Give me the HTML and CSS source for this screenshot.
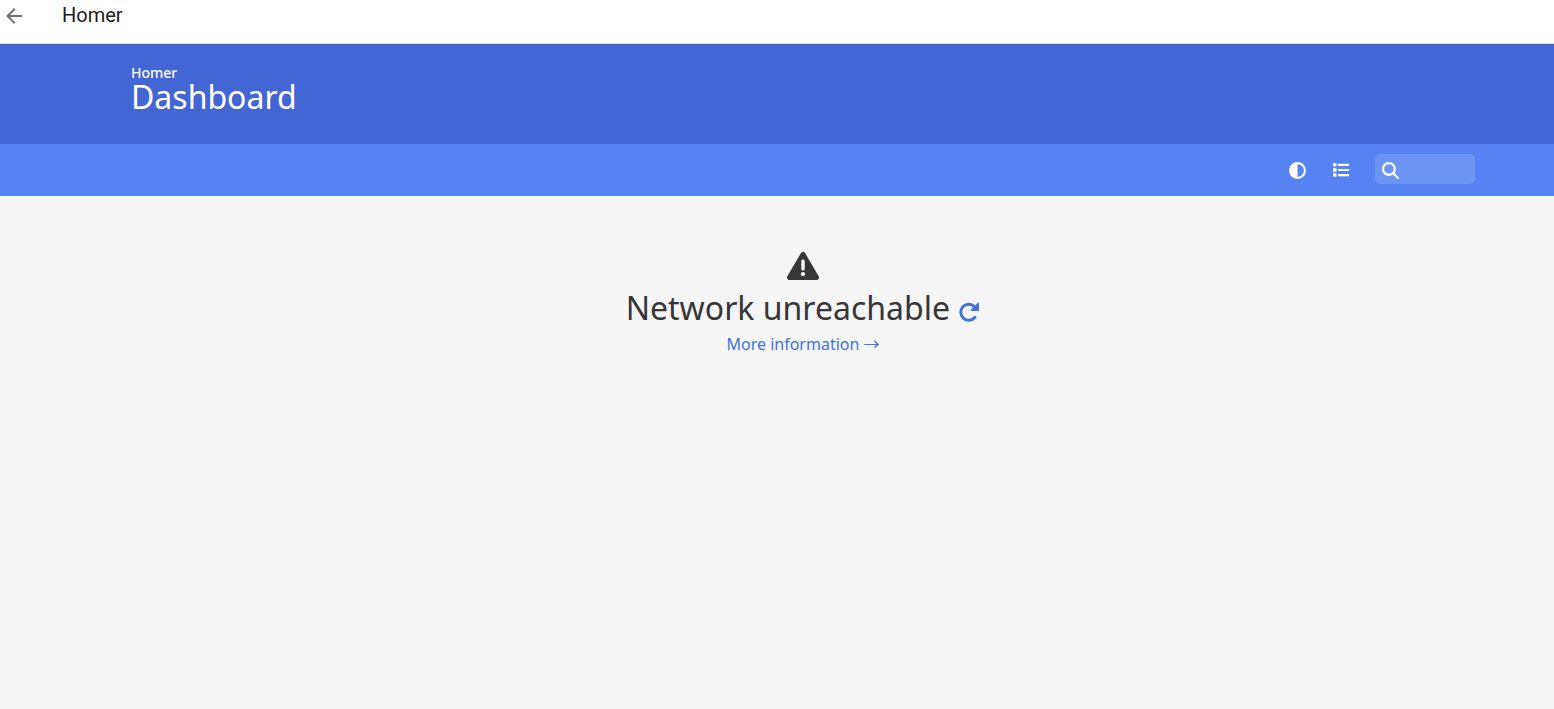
FILE: index.html
```html
<!DOCTYPE html>
<html lang="en">
<head>
<meta charset="utf-8">
<title>Homer</title>
<link rel="stylesheet" href="styles.css">
</head>
<body>
<div class="toolbar">
  <button class="back" type="button" aria-label="Back">
    <svg width="24" height="24" viewBox="0 0 24 24" fill="currentColor"><path d="M20 11v2H8l5.500 5.500-1.420 1.420L4.160 12l7.920-7.920L13.500 5.500 8 11h12z"/></svg>
  </button>
  <span class="toolbar-title">Homer</span>
</div>
<header class="banner">
  <div class="container">
    <span class="headline">Homer</span>
    <h1 class="title">Dashboard</h1>
  </div>
</header>
<nav class="navbar" aria-label="Dashboard tools">
  <div class="container navbar-end">
    <button class="tool" type="button" aria-label="Toggle theme">
      <svg width="17" height="17" viewBox="0 0 512 512" fill="currentColor"><path d="M448 256c0-106-86-192-192-192v384c106 0 192-86 192-192zM0 256a256 256 0 1 1 512 0A256 256 0 1 1 0 256z"/></svg>
    </button>
    <button class="tool" type="button" aria-label="Toggle layout">
      <svg width="16" height="16" viewBox="0 0 16 16" fill="currentColor"><path d="M0 2q0-1 1-1h2.500v3.500H0zM0 6.200h3.500v3.500H0zM0 11.300h3.500v3.500H1q-1 0-1-1zM5 1.800h11v2.200H5zM5 6.900h11v2.200H5zM5 12h11v2.200H5z"/></svg>
    </button>
    <label class="search">
      <svg class="search-icon" width="17" height="17" viewBox="0 0 512 512" fill="currentColor"><path d="M416 208c0 45.900-14.900 88.300-40 122.700L502.600 457.400c12.500 12.500 12.500 32.800 0 45.300s-32.800 12.500-45.300 0L330.700 376c-34.400 25.200-76.800 40-122.700 40C93.100 416 0 322.900 0 208S93.100 0 208 0S416 93.100 416 208zM208 352a144 144 0 1 0 0-288 144 144 0 1 0 0 288z"/></svg>
      <input type="text" aria-label="Search">
    </label>
  </div>
</nav>
<main class="content">
  <div class="container message">
    <svg class="warning" width="32" height="32" viewBox="0 0 512 512" fill="currentColor"><path d="M256 32c14.200 0 27.300 7.500 34.500 19.800l216 368c7.300 12.400 7.300 27.700 .2 40.100S486.300 480 472 480H40c-14.300 0-27.600-7.700-34.700-20.100s-7-27.800 .2-40.100l216-368C228.700 39.500 241.800 32 256 32zm0 120c-16 0-28 10.700-28 26V302c0 13.300 12 24 28 24s28-10.700 28-24V178c0-15.300-12-26-28-26zm36 232a36 34 0 1 0-72 0 36 34 0 1 0 72 0z"/></svg>
    <h2 class="status">Network unreachable
      <button class="reload" type="button" aria-label="Retry">
        <svg width="22" height="22" viewBox="0 0 22 22"><path d="M17 16.300A8 8 0 1 1 16.500 5.700L18 7" fill="none" stroke="currentColor" stroke-width="3" stroke-linecap="round"/><path d="M21 2.500V9q0 1-1 1h-6.500q-1.500 0-.5-1.500L19.500 2q1.500-1 1.500.5z" fill="currentColor"/></svg>
      </button>
    </h2>
    <a class="more" href="#help">More information <span class="arrow">→</span></a>
  </div>
</main>
</body>
</html>
```
FILE: styles.css
```css
* { box-sizing: border-box; }
body {
  margin: 0;
  min-height: 100vh;
  background: #f5f5f5;
  color: #363636;
  font-family: "Noto Sans", sans-serif;
  font-size: 16px;
}
button {
  display: inline-flex;
  padding: 0;
  border: 0;
  background: none;
  color: inherit;
  cursor: pointer;
}
h1, h2 { margin: 0; font-weight: 400; }
.toolbar {
  display: flex;
  align-items: flex-start;
  gap: 36px;
  height: 44px;
  padding: 3px 2px;
  border-bottom: 1px solid #e0e0e0;
  background: #fff;
  color: #212121;
  font: 20px/24px Roboto, sans-serif;
}
.back { padding-top: 1px; color: #727272; }
.container { margin: 0 79px 0 131px; }
.banner {
  height: 100px;
  padding-top: 20px;
  background: #4466d4;
  color: #fff;
}
.headline { display: block; font-size: 14px; font-weight: 500; line-height: 18px; }
.title { font-size: 32px; line-height: 29px; }
.navbar {
  padding: 10px 0 12px;
  background: #5583f1;
  color: #fff;
}
.navbar-end {
  display: flex;
  justify-content: flex-end;
  align-items: center;
  gap: 26px;
}
.tool { padding: 2px 1px 0 0; }
.tool + .search { margin-left: -1px; }
.search {
  display: flex;
  align-items: center;
  width: 100px;
  height: 30px;
  padding: 2px 7px 0;
  border-radius: 5px;
  background: #6b94f3;
}
.search-icon { flex-shrink: 0; }
.search input {
  min-width: 0;
  width: 100%;
  padding: 0 0 0 8px;
  border: 0;
  outline: 0;
  background: none;
  color: inherit;
  font: inherit;
}
.message {
  display: flex;
  flex-direction: column;
  align-items: center;
  padding-top: 54px;
}
.status { margin-top: 2px; font-size: 32px; line-height: 48px; }
.reload { color: #4472dd; vertical-align: -3px; }
.more { color: #4472dd; line-height: 24px; text-decoration: none; }
.arrow { font-family: "Noto Sans CJK JP", sans-serif; line-height: 1; }
```
